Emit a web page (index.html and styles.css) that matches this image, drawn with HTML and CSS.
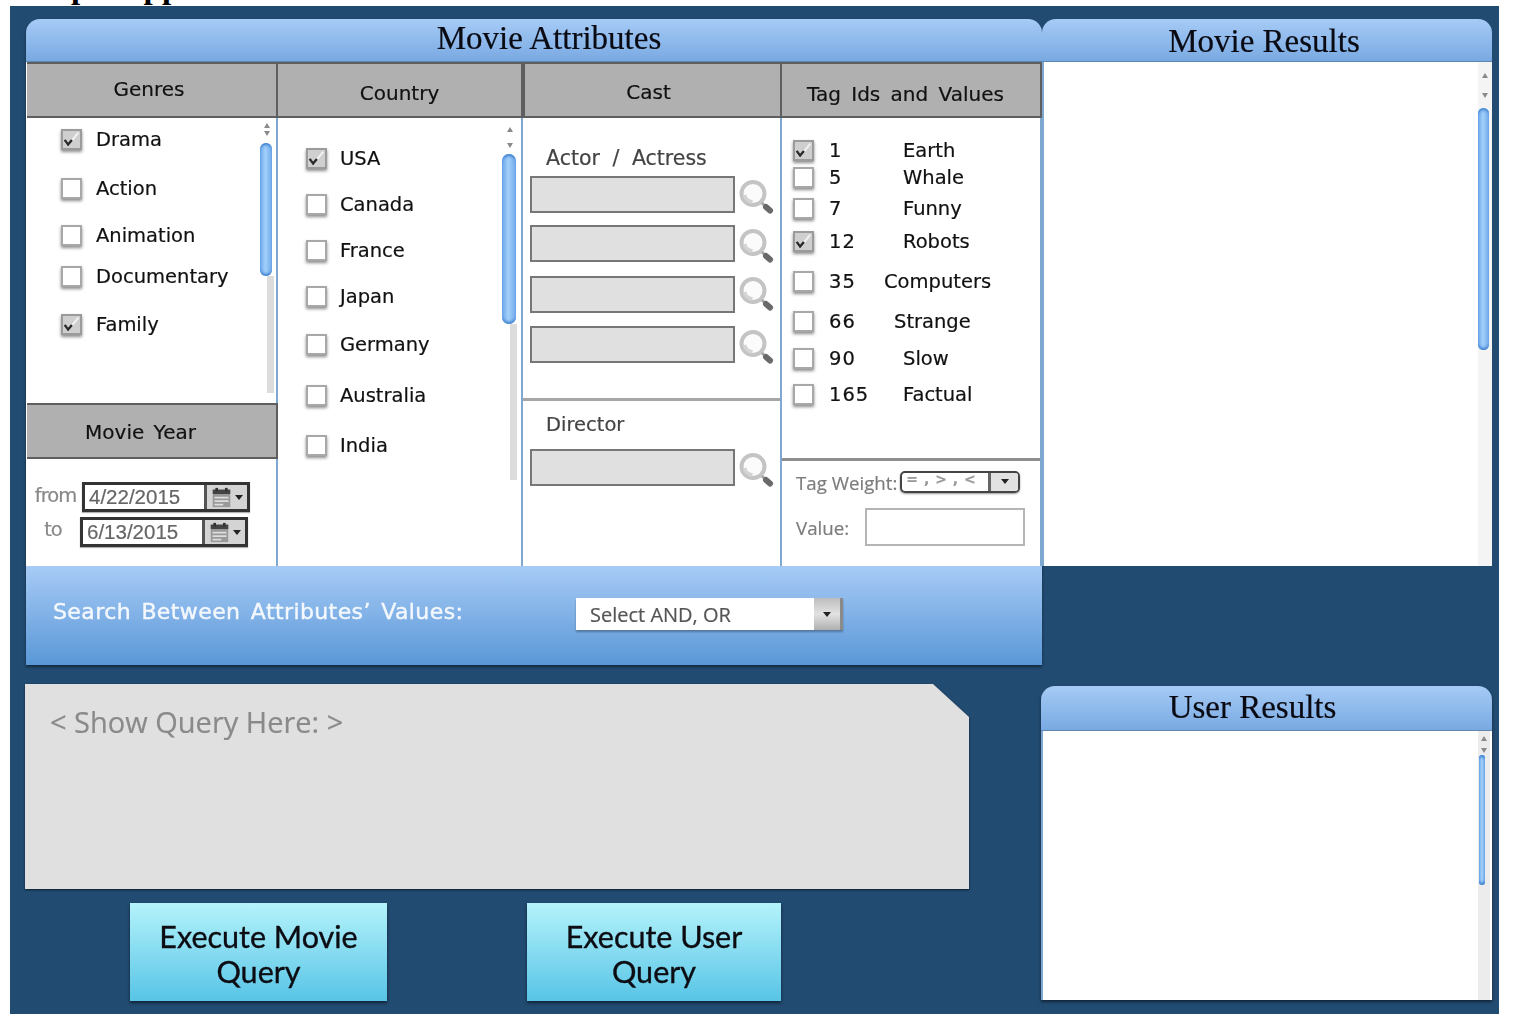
FILE: index.html
```html
<!DOCTYPE html>
<html lang="en">
<head>
<meta charset="utf-8">
<title>Movie Query Interface</title>
<link rel="stylesheet" href="styles.css">
</head>
<body>
<svg class="defs" width="0" height="0" aria-hidden="true">
  <defs>
    <symbol id="check" viewBox="0 0 20 20"><path d="M3 13l3 4L18 2" fill="none" stroke="#f2f2f2" stroke-width="2.200"/><path d="M2 10.500l4 5.500 4.500-5.500" fill="none" stroke="#2a2a2a" stroke-width="2.800"/></symbol>
    <symbol id="glass" viewBox="0 0 36 34"><circle cx="15" cy="13.500" r="11.500" fill="#fbfbfb" stroke="#c4c4c4" stroke-width="4"/><path d="M6.500 15c1 4 4 6.500 8 7" fill="none" stroke="#d4d4d4" stroke-width="3.500"/><path d="M24 23l3 3" stroke="#a5a5a5" stroke-width="3"/><path d="M28 27l4 3.500" stroke="#6a6a6a" stroke-width="6" stroke-linecap="round"/></symbol>
    <symbol id="cal" viewBox="0 0 24 24"><rect x="2" y="3" width="20" height="20" fill="#999"/><rect x="2" y="3" width="20" height="5" fill="#444"/><rect x="5" y="1" width="3" height="4" fill="#333"/><rect x="16" y="1" width="3" height="4" fill="#333"/><path d="M4 12h16M4 16h16M4 20h10" stroke="#ddd" stroke-width="2"/></symbol>
  </defs>
</svg>
<div class="cut-title"><p class="cut-text">p pp</p></div>
<main class="canvas">
  <div class="left">
    <section class="attrs">
      <h1 class="title title-attrs">Movie Attributes</h1>
      <div class="columns">
        <div class="col col-genres">
          <h2 class="head head-genres">Genres</h2>
          <div class="scroll-wrap wrap-genres">
            <ul class="list list-genres">
              <li class="item"><span class="box on"><svg><use href="#check"/></svg></span>Drama</li>
              <li class="item"><span class="box"></span>Action</li>
              <li class="item"><span class="box"></span>Animation</li>
              <li class="item"><span class="box"></span>Documentary</li>
              <li class="item"><span class="box on"><svg><use href="#check"/></svg></span>Family</li>
            </ul>
            <div class="sb sb-genres"><i class="up"></i><i class="down"></i><b class="thumb"></b><span class="track"></span></div>
          </div>
          <h2 class="head head-year">Movie Year</h2>
          <div class="dates">
            <div class="date-row date-from"><span class="date-label">from</span><div class="date"><span class="date-val">4/22/2015</span><span class="date-btn"><svg class="cal"><use href="#cal"/></svg><i class="mini-arrow"></i></span></div></div>
            <div class="date-row date-to"><span class="date-label">to</span><div class="date"><span class="date-val">6/13/2015</span><span class="date-btn"><svg class="cal"><use href="#cal"/></svg><i class="mini-arrow"></i></span></div></div>
          </div>
        </div>
        <div class="col col-country">
          <h2 class="head head-country">Country</h2>
          <div class="scroll-wrap wrap-country">
            <ul class="list list-country">
              <li class="item"><span class="box on"><svg><use href="#check"/></svg></span>USA</li>
              <li class="item"><span class="box"></span>Canada</li>
              <li class="item"><span class="box"></span>France</li>
              <li class="item"><span class="box"></span>Japan</li>
              <li class="item"><span class="box"></span>Germany</li>
              <li class="item"><span class="box"></span>Australia</li>
              <li class="item"><span class="box"></span>India</li>
            </ul>
            <div class="sb sb-country"><i class="up"></i><i class="down"></i><b class="thumb"></b><span class="track"></span></div>
          </div>
        </div>
        <div class="col col-cast">
          <h2 class="head head-cast">Cast</h2>
          <div class="cast-top">
            <div class="cast-label">Actor / Actress</div>
            <div class="search-rows">
              <div class="search"><span class="field"></span><svg class="glass"><use href="#glass"/></svg></div>
              <div class="search"><span class="field"></span><svg class="glass"><use href="#glass"/></svg></div>
              <div class="search"><span class="field"></span><svg class="glass"><use href="#glass"/></svg></div>
              <div class="search"><span class="field"></span><svg class="glass"><use href="#glass"/></svg></div>
            </div>
          </div>
          <div class="cast-bottom">
            <div class="cast-label">Director</div>
            <div class="search"><span class="field"></span><svg class="glass"><use href="#glass"/></svg></div>
          </div>
        </div>
        <div class="col col-tags">
          <h2 class="head head-tags">Tag Ids and Values</h2>
          <ul class="list list-tags">
            <li class="tag"><span class="box on"><svg><use href="#check"/></svg></span><span class="tag-id">1</span><span>Earth</span></li>
            <li class="tag"><span class="box"></span><span class="tag-id">5</span><span>Whale</span></li>
            <li class="tag"><span class="box"></span><span class="tag-id">7</span><span>Funny</span></li>
            <li class="tag"><span class="box on"><svg><use href="#check"/></svg></span><span class="tag-id">12</span><span>Robots</span></li>
            <li class="tag"><span class="box"></span><span class="tag-id">35</span><span class="val-far">Computers</span></li>
            <li class="tag"><span class="box"></span><span class="tag-id">66</span><span class="val-near">Strange</span></li>
            <li class="tag"><span class="box"></span><span class="tag-id">90</span><span>Slow</span></li>
            <li class="tag"><span class="box"></span><span class="tag-id">165</span><span>Factual</span></li>
          </ul>
          <div class="weight">
            <div class="weight-row"><span class="weight-label">Tag Weight:</span><div class="op-select"><span class="op-text">= , &gt; , &lt;</span><span class="op-btn"><i class="mini-arrow"></i></span></div></div>
            <div class="value-row"><span class="weight-label">Value:</span><span class="value-input"></span></div>
          </div>
        </div>
      </div>
      <div class="search-bar">
        <span class="search-bar-label">Search Between Attributes’ Values:</span>
        <div class="and-select"><span class="and-text">Select AND, OR</span><span class="and-btn"><i class="mini-arrow"></i></span></div>
      </div>
    </section>
    <div class="query-shadow"><div class="query">&lt; Show Query Here: &gt;</div></div>
    <div class="actions">
      <button class="exec exec-movie" type="button">Execute Movie<br>Query</button>
      <button class="exec exec-user" type="button">Execute User<br>Query</button>
    </div>
  </div>
  <div class="right">
    <section class="results results-movie">
      <h1 class="title title-movie">Movie Results</h1>
      <div class="results-body"><div class="sb sb-movie"><i class="up"></i><i class="down"></i><b class="thumb"></b><span class="track"></span></div></div>
    </section>
    <section class="results results-user">
      <h1 class="title title-user">User Results</h1>
      <div class="results-body"><div class="sb sb-user"><i class="up"></i><i class="down"></i><b class="thumb"></b><span class="track"></span></div></div>
    </section>
  </div>
</main>
</body>
</html>
```
FILE: styles.css
```css
* { box-sizing: border-box; }
html, body { margin: 0; padding: 0; background: #fff; }
body { width: 1520px; height: 1016px; overflow: hidden; font-family: "DejaVu Sans", sans-serif; color: #111; }
.defs { position: absolute; }
h1, h2, ul, p { margin: 0; padding: 0; font-weight: normal; }
ul { list-style: none; }

.cut-title { height: 6px; overflow: hidden; padding-left: 71px; }
.cut-text { margin-top: -29px; font: bold 33px/33px "Liberation Serif", serif; word-spacing: 46px; color: #000; }

.canvas { display: flex; width: 1489px; height: 1008px; margin-left: 10px; padding: 13px 0 0 16px; background: #224b71; filter: blur(0.45px); -webkit-text-stroke: .2px currentColor; }
.left { width: 1016px; flex: none; }
.right { width: 450px; flex: none; }

.attrs { height: 646px; display: flex; flex-direction: column; border-radius: 14px 14px 0 0; box-shadow: 0 2px 3px rgba(0, 0, 0, .45); }
.title { height: 43px; display: flex; align-items: center; justify-content: center; font: 33px/1 "Liberation Serif", serif; color: #0a0a12; background: linear-gradient(#a6cbf6, #79a9e2); border-radius: 14px 14px 0 0; border-bottom: 1px solid #5f86ad; }
.title-attrs { padding: 0 0 3px 30px; }
.title-movie { padding: 2px 6px 0 0; }
.title-user { height: 45px; padding: 0 28px 2px 0; }

.columns { flex: none; height: 504px; display: grid; grid-template-columns: 251px 245px 259px 260px; padding-left: 1px; background: #fff; }
.col { display: flex; flex-direction: column; border-right: 2px solid #7ea8d0; min-width: 0; }
.head { height: 56px; flex: none; display: flex; align-items: center; justify-content: center; font-size: 20px; background: #b0b0b0; border: 2px solid #5e5e5e; border-width: 2px 0 2px 0; border-right: 2px solid #5e5e5e; margin: 0 -2px -1px 0; position: relative; }
.head-genres { padding: 0 5px 3px 0; }
.head-country { padding: 6px 0 0 0; }
.head-cast { padding: 4px 8px 0 0; border-left: 2px solid #5e5e5e; }
.head-tags { padding: 8px 11px 0 0; word-spacing: 4px; }
.head-year { margin-top: -1px; padding: 1px 22px 0 0; word-spacing: 3px; }

.scroll-wrap { display: flex; flex: none; }
.wrap-genres { height: 287px; }
.wrap-country { height: 449px; }
.list { flex: 1; min-width: 0; }
.item { display: flex; align-items: center; font-size: 19.500px; }
.list-genres { display: grid; grid-template-rows: 44px 54px 40px 42px 54px; align-content: start; padding-left: 34px; }
.list-genres .item { gap: 14px; }
.list-country { display: grid; grid-template-rows: 46px 46px 46px 46px 50px 52px 48px; align-content: start; padding: 18px 0 0 28px; }
.list-country .item { gap: 13px; }
.box { width: 21px; height: 21px; flex: none; display: block; background: #fff; border: 2px solid #a8a8a8; box-shadow: 0 2px 3px rgba(0, 0, 0, .45); }
.box.on { background: #cfcfcf; border-color: #9b9b9b; }
.box svg { display: block; width: 17px; height: 17px; }

.sb { display: flex; flex-direction: column; flex: none; position: relative; }
.sb .up, .sb .down { display: block; width: 0; height: 0; margin: 0 auto; border-left: 3px solid transparent; border-right: 3px solid transparent; }
.sb .up { border-bottom: 5px solid #8a8a8a; }
.sb .down { border-top: 5px solid #8a8a8a; }
.thumb { display: block; flex: none; border-radius: 7px; background: linear-gradient(90deg, #6aa6ea, #a3d0fa 45%, #6fa9ea); box-shadow: inset 0 4px 3px -2px #3d7fd0, inset 0 -4px 3px -2px #3d7fd0; }
.track { display: block; flex: 1; min-height: 0; width: 7px; margin-left: auto; background: #dcdcdc; }
.sb-genres { width: 14px; height: 272px; margin: 4px 2px 0 0; }
.sb-genres .up { margin-top: 2px; }
.sb-genres .down { margin-top: 3px; }
.sb-genres .thumb { height: 133px; width: 12px; margin-top: 7px; }
.sb-country { width: 15px; height: 357px; margin: 6px 4px 0 0; }
.sb-country .up { margin-top: 4px; }
.sb-country .down { margin-top: 11px; }
.sb-country .thumb { height: 170px; width: 14px; margin-top: 6px; }
.sb-movie { width: 14px; height: 504px; }
.sb-movie .up { margin-top: 11px; }
.sb-movie .down { margin-top: 15px; }
.sb-movie .thumb { height: 242px; width: 11px; margin: 10px 0 0 0; }
.sb-movie .track, .sb-user .track { display: none; }
.sb-user { width: 12px; height: 269px; margin-right: 2px; }
.sb-user .up { margin-top: 5px; }
.sb-user .down { margin-top: 7px; }
.sb-user .thumb { height: 130px; width: 6px; margin: 2px 0 0 1px; }

.dates { flex: 1; display: flex; flex-direction: column; gap: 5px; padding-top: 24px; }
.date-row { display: flex; align-items: center; }
.date-from { padding-left: 2px; }
.date-to { padding-left: 5px; }
.date-label { width: 53px; text-align: center; font-size: 19.500px; line-height: 26px; letter-spacing: -1px; color: #888; filter: blur(.5px); margin-top: -3px; }
.date-to .date-label { width: 48px; padding-right: 6px; margin-top: -5px; }
.date { width: 168px; height: 30px; display: flex; border: 3px solid #333; background: #fff; box-shadow: 0 1px 1px rgba(0, 0, 0, .3); filter: blur(.5px); }
.date-val { width: 119px; padding-left: 4px; font: 20.500px/23px "Liberation Sans", sans-serif; color: #666; }
.date-btn { flex: 1; display: flex; align-items: center; gap: 3px; padding-left: 4px; background: #d4d4d4; border-left: 3px solid #555; }
.cal { width: 21px; height: 21px; flex: none; }
.mini-arrow { display: block; width: 0; height: 0; border-left: 4px solid transparent; border-right: 4px solid transparent; border-top: 5px solid #222; }

.cast-top { height: 281px; padding: 27px 0 0 7px; flex: none; }
.cast-label { font-size: 19.500px; line-height: 28px; padding-left: 16px; color: #444; word-spacing: 3px; }
.cast-top .cast-label { font-size: 20.500px; word-spacing: 6px; }
.search-rows { display: grid; grid-template-rows: 49px 51px 50px 37px; margin-top: 4px; }
.search { display: flex; align-items: flex-start; gap: 3px; }
.field { display: block; width: 205px; height: 37px; background: #e0e0e0; border: 2px solid #777; }
.glass { width: 36px; height: 34px; flex: none; margin-top: 4px; }
.search-rows .search:nth-child(3) .glass { margin-top: 1px; }
.cast-bottom { flex: 1; padding: 10px 0 0 7px; border-top: 3px solid #a6a6a6; }
.cast-bottom .cast-label { margin-bottom: 10px; }

.list-tags { flex: none; height: 341px; display: grid; grid-template-rows: 28px 26px 36px 30px 50px 30px 44px 28px; align-content: start; padding: 19px 0 0 11px; }
.tag { display: grid; grid-template-columns: 36px 74px 1fr; align-items: center; font-size: 19.500px; }
.tag-id { letter-spacing: 1px; }
.val-far { margin-left: -19px; }
.val-near { margin-left: -9px; }
.weight { flex: 1; border-top: 3px solid #8f8f8f; padding: 10px 0 0 14px; font-family: "Open Sans", sans-serif; }
.weight-row { display: flex; align-items: center; gap: 3px; height: 23px; }
.weight-label { font-size: 18.700px; color: #7c7c7c; }
.op-select { width: 120px; height: 22px; display: flex; border: 2px solid #444; border-radius: 5px; margin-top: -2px; box-shadow: 0 1px 2px rgba(0, 0, 0, .4); }
.op-text { flex: 1; font: bold 14px/12px "DejaVu Sans", sans-serif; padding-left: 4px; color: #999; word-spacing: 1px; }
.op-btn { width: 30px; display: flex; align-items: center; justify-content: center; background: #e2e2e2; border-left: 3px solid #666; border-radius: 0 3px 3px 0; }
.value-row { display: flex; align-items: center; margin-top: 14px; }
.value-row .weight-label { width: 69px; }
.value-input { width: 160px; height: 38px; border: 2px solid #b5b5b5; background: #fff; }

.search-bar { flex: 1; display: flex; align-items: flex-start; padding: 32px 0 0 27px; background: linear-gradient(#a7cbf6, #5a97d7); }
.search-bar-label { width: 523px; flex: none; font-size: 22px; line-height: 28px; color: #f4f8fd; word-spacing: 3px; letter-spacing: .4px; -webkit-text-stroke: .4px currentColor; }
.and-select { display: flex; width: 267px; height: 32px; flex: none; box-shadow: 0 2px 2px rgba(0, 0, 0, .3); }
.and-text { width: 238px; padding: 3px 0 0 14px; background: #fff; font: 20px/28px "Open Sans", sans-serif; color: #555; }
.and-btn { flex: 1; display: flex; align-items: center; justify-content: center; background: linear-gradient(#bdbdbd, #e2e2e2 50%, #b0b0b0); border-right: 3px solid #8a8a8a; }

.query-shadow { margin: 19px 0 0 -1px; width: 944px; filter: drop-shadow(0 1px 1px rgba(0, 0, 0, .6)); }
.query { height: 205px; padding: 20px 0 0 25px; background: #e0e0e0; clip-path: polygon(0 0, 908px 0, 100% 33px, 100% 100%, 0 100%); font: 29px/36px "Open Sans", sans-serif; color: #8a8a8a; }

.actions { display: flex; margin-top: 14px; padding-left: 104px; gap: 140px; }
.exec { height: 98px; padding: 4px 0 0; border: 0; font: 30.500px/35px Lato, sans-serif; color: #0c0c12; background: linear-gradient(#b4f3fb, #58c4e6); box-shadow: 0 2px 3px rgba(0, 0, 0, .55); -webkit-text-stroke: .35px currentColor; }
.exec-movie { width: 257px; }
.exec-user { width: 254px; }

.results { display: flex; flex-direction: column; border-radius: 14px 14px 0 0; }
.results-movie { height: 547px; }
.results-user { height: 314px; margin: 120px 0 0 -1px; box-shadow: 0 2px 3px rgba(0, 0, 0, .5); }
.results-body { flex: 1; display: flex; justify-content: flex-end; background: #fff; border-left: 2px solid #7ea8d0; }
.results-movie .sb { background: #f4f4f4; }
.results-user .sb { background: #ececec; }
```
